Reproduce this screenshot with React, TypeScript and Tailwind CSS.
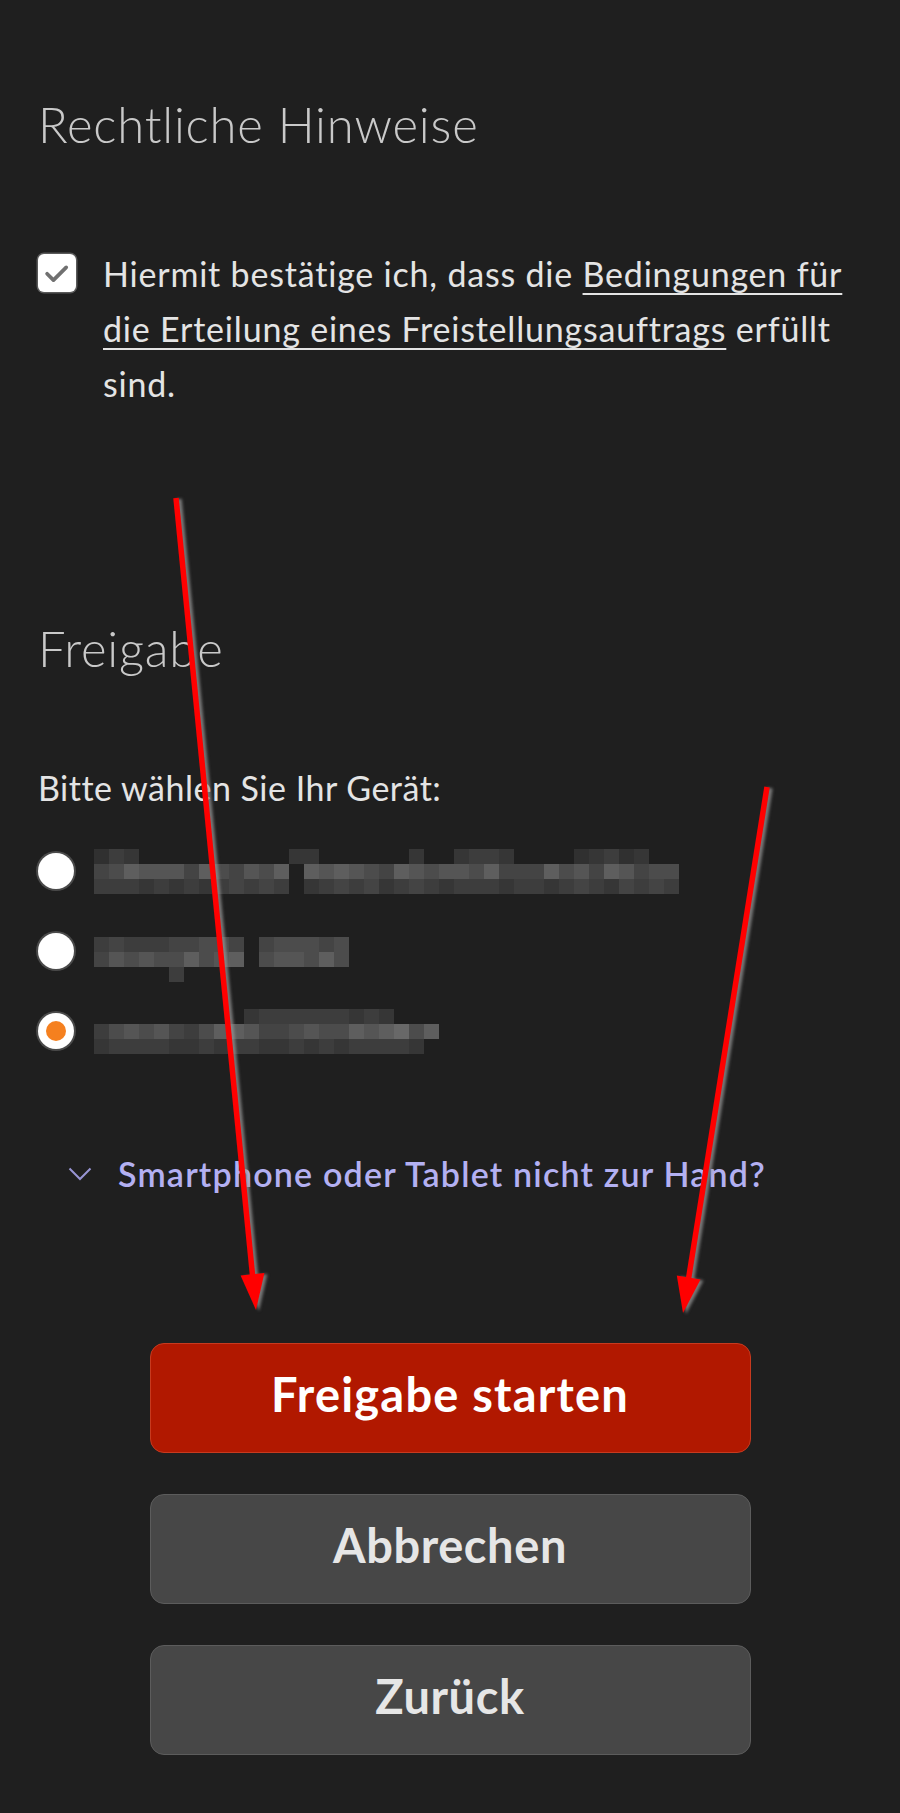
import React from "react";

// grey tones for the pixelated (anonymised) device names
const palette: Record<string, string> = {
  "1": "#2a2a2a",
  "2": "#303030",
  "3": "#363636",
  "4": "#3d3d3d",
  "5": "#444444",
  "6": "#4c4c4c",
  "7": "#555555",
  "8": "#5e5e5e",
  "9": "#686868",
};

interface Device {
  bands: string[];
  shift: string;
  checked: boolean;
}

const devices: Device[] = [
  {
    bands: [
      "243000000000033000000300344300002342300",
      "568777586576808787658767768555867587566",
      "444343434545403454534543444344345435454",
    ],
    shift: "",
    checked: false,
  },
  {
    bands: ["45444556650566656", "57676686780677686", "00000400000000000"],
    shift: "translate-y-[8px]",
    checked: false,
  },
  {
    bands: [
      "00000000003444444343000",
      "46767546887556766878968",
      "34444334344334343444430",
    ],
    shift: "",
    checked: true,
  },
];

const Pixels: React.FC<{ bands: string[] }> = ({ bands }) => (
  <div className="flex flex-col">
    {bands.map((band, i) => (
      <div key={i} className="flex h-[15px]">
        {band.split("").map((c, j) => (
          <span
            key={j}
            className="h-[15px] w-[15px]"
            style={{ backgroundColor: palette[c] ?? "transparent" }}
          />
        ))}
      </div>
    ))}
  </div>
);

const Radio: React.FC<{ checked: boolean }> = ({ checked }) => (
  <span className="flex h-[36px] w-[36px] shrink-0 items-center justify-center rounded-full bg-white shadow-[0_0_0_2px_#4a4a4a]">
    {checked && <span className="h-[20px] w-[20px] rounded-full bg-[#f5801f]" />}
  </span>
);

// red annotation arrows drawn over the screenshot
const Arrows = () => (
  <svg
    className="pointer-events-none absolute left-0 top-0 drop-shadow-[3px_1px_1.5px_rgba(150,150,150,0.75)]"
    width="900"
    height="1813"
    viewBox="0 0 900 1813"
  >
    <line x1="176" y1="498" x2="253" y2="1280" stroke="#ff0000" strokeWidth="5.5" />
    <polygon points="256,1310 264.4,1273 240.6,1275.4" fill="#ff0000" />
    <line x1="767" y1="787" x2="688" y2="1282" stroke="#ff0000" strokeWidth="5.5" />
    <polygon points="683,1313 700.5,1279.4 676.8,1275.6" fill="#ff0000" />
  </svg>
);

export default function App() {
  return (
    <div className="relative min-h-[1813px] w-full bg-[#1f1f1f] px-[38px] pt-[96px] font-['Lato',sans-serif]">
      <h1 className="text-[49px] leading-[56px] font-light tracking-[0.8px] text-[#c9c9c9]">
        Rechtliche Hinweise
      </h1>

      {/* Confirmation checkbox */}
      <div className="mt-[94px] flex gap-[27px]">
        <span className="mt-[8px] flex h-[38px] w-[38px] shrink-0 items-center justify-center rounded-[6px] bg-white shadow-[0_0_0_1.5px_#5a5a5a]">
          <svg width="34" height="34" viewBox="0 0 24 24" fill="none">
            <path
              d="M5 12.5 L9.5 17 L18.5 8"
              stroke="#707070"
              strokeWidth="2.6"
              strokeLinecap="round"
              strokeLinejoin="round"
            />
          </svg>
        </span>
        <p className="text-[34px] leading-[55px] tracking-[0.8px] text-[#e4e4e4]">
          Hiermit bestätige ich, dass die{" "}
          <a className="underline decoration-2 underline-offset-[6px]">
            Bedingungen für die Erteilung eines Freistellungsauftrags
          </a>{" "}
          erfüllt sind.
        </p>
      </div>

      <h2 className="mt-[209px] text-[49px] leading-[56px] font-light tracking-[0.8px] text-[#c9c9c9]">
        Freigabe
      </h2>

      <p className="mt-[92px] text-[34px] leading-[40px] tracking-[0.5px] text-[#e4e4e4]">
        Bitte wählen Sie Ihr Gerät:
      </p>

      {/* Device list */}
      <div className="mt-[23px] flex flex-col">
        {devices.map((d, i) => (
          <div key={i} className="flex h-[80px] items-center gap-[20px]">
            <Radio checked={d.checked} />
            <div className={d.shift}>
              <Pixels bands={d.bands} />
            </div>
          </div>
        ))}
      </div>

      <div className="mt-[83px] flex items-center gap-[26px] pl-[30px]">
        <svg width="24" height="14" viewBox="0 0 24 14" fill="none">
          <path d="M1.5 1.5 L12 12 L22.5 1.5" stroke="#9895d4" strokeWidth="2" />
        </svg>
        <span className="text-[34px] leading-[40px] font-semibold tracking-[1.2px] text-[#b3b0f2]">
          Smartphone oder Tablet nicht zur Hand?
        </span>
      </div>

      {/* Action buttons */}
      <div className="mt-[149px] flex flex-col items-center gap-[41px]">
        <button className="h-[110px] w-[601px] rounded-[14px] border border-[#c73a1f] bg-[#b11800] pb-[8px] text-[47px] font-bold tracking-[1.2px] text-white">
          Freigabe starten
        </button>
        <button className="h-[110px] w-[601px] rounded-[14px] border border-[#5c5c5c] bg-[#474747] pb-[8px] text-[47px] font-bold tracking-[0.6px] text-[#e6e6e6]">
          Abbrechen
        </button>
        <button className="h-[110px] w-[601px] rounded-[14px] border border-[#5c5c5c] bg-[#474747] pb-[8px] text-[47px] font-bold tracking-[0.6px] text-[#e6e6e6]">
          Zurück
        </button>
      </div>

      <Arrows />
    </div>
  );
}
